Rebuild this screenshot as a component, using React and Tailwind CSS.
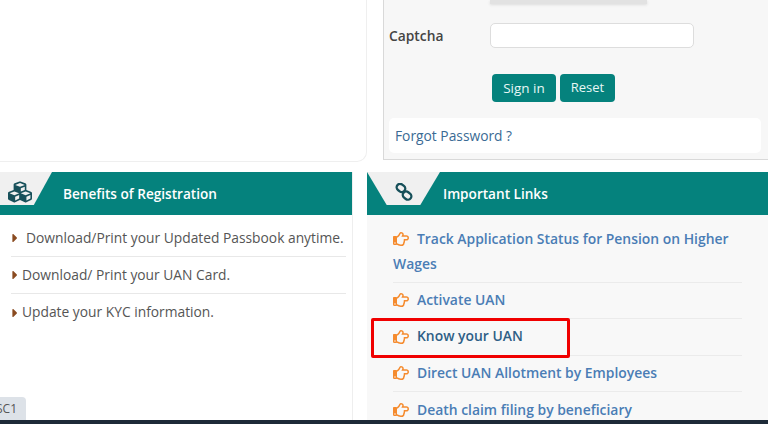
import React from "react";
import { FaCubes, FaRegHandPointRight, FaCaretRight } from "react-icons/fa";

const F = { fontFamily: '"Open Sans", sans-serif' };

function ChainIcon() {
  return (
    <svg width="18" height="18" viewBox="0 0 20 20" fill="none" className="block">
      <g stroke="#17505a" strokeWidth="2.6">
        <rect x="1.6" y="1.7" width="10" height="7.6" rx="3.8" transform="rotate(38 6.6 5.5)" />
        <rect x="8.4" y="10.2" width="10" height="7.6" rx="3.8" transform="rotate(38 13.4 14)" />
      </g>
    </svg>
  );
}

function Benefit({ children, gap, last }) {
  return (
    <li className={`flex items-center h-[37px] ml-[11px] mr-[6px] ${last ? "" : "border-b border-[#e8e8e8]"}`}>
      <FaCaretRight className={`text-[#8a4b20] text-[14px] shrink-0 ml-[-3px] ${gap}`} />
      <span className="text-[13.8px] text-[#555] whitespace-nowrap">{children}</span>
    </li>
  );
}

function LinkRow({ children, active, wrap, last }) {
  return (
    <li className={`ml-[26px] mr-[26px] ${last ? "" : "border-b border-[#ebebeb]"} ${wrap ? "pt-[11px] h-[67.6px]" : "h-[36.5px] flex items-center"}`}>
      <div className={`${wrap ? "leading-[25px]" : "flex items-center"} text-[13.9px] font-semibold ${active ? "text-[#2f5f86]" : "text-[#4a7db5]"}`}>
        <FaRegHandPointRight className={`text-[#f58b2e] text-[16px] mr-[8px] ${wrap ? "inline align-[-3px]" : ""}`} />
        {children}
      </div>
    </li>
  );
}

export default function App() {
  return (
    <div style={F} className="relative w-[768px] h-[424px] overflow-hidden bg-white flex flex-col">
      <div className="flex h-[172px] shrink-0">
        <div className="w-[377px] h-[162px] ml-[-10px] shrink-0 bg-white rounded-br-[10px] border-r border-b border-[#efefef]" />
        <div className="ml-[16px] w-[385px] h-[160px] bg-[#f7f7f7] border border-t-0 border-r-0 border-[#d9d9d9] pl-[5px]">
          <div className="ml-[101px] w-[157px] h-[4px] bg-[#e2e2e2] shadow-[0_1px_3px_#ddd]" />
          <div className="flex items-center mt-[19px] h-[25px]">
            <label className="w-[101px] pt-[2px] text-[13.8px] font-semibold text-[#444]">Captcha</label>
            <input className="w-[204px] h-[25px] bg-white border-[1.5px] border-[#ddd] rounded-[5px]" />
          </div>
          <div className="flex gap-[4px] ml-[103px] mt-[26px]">
            <button className="h-[28px] w-[64px] rounded-[4px] bg-[#05827d] text-[#e8f7f5] text-[13.5px]">Sign in</button>
            <button className="h-[28px] w-[55px] rounded-[4px] bg-[#05827d] text-[#e8f7f5] text-[13px]">Reset</button>
          </div>
          <div className="mt-[16px] mr-[7px] h-[35px] bg-white rounded-[5px] flex items-center pl-[6px] pt-[2px] text-[13.8px] text-[#3a6a94]">
            Forgot Password ?
          </div>
        </div>
      </div>

      <div className="flex flex-1 min-h-0 items-stretch">
        <section className="w-[353px] shrink-0 border-r border-[#eee] bg-white">
          <header className="relative h-[43px] bg-[#05827d] flex items-center pl-[63px] text-white font-semibold text-[13.6px] pt-[1px]">
            <div className="absolute left-0 top-0 w-[52px] h-[33px] bg-[#f0f0f0] [clip-path:polygon(0_0,100%_0,65%_100%,0_100%)] flex items-center pl-[8px] pt-[6px] text-[#17505a] text-[24px]">
              <FaCubes />
            </div>
            Benefits of Registration
          </header>
          <ul className="pt-[5px]">
            <Benefit gap="mr-[4px]">Download/Print your Updated Passbook anytime.</Benefit>
            <Benefit gap="mr-0">Download/ Print your UAN Card.</Benefit>
            <Benefit gap="mr-0" last>Update your KYC information.</Benefit>
          </ul>
        </section>
        <section className="ml-[14px] flex-1 bg-[#f8f8f8]">
          <header className="relative h-[43px] bg-[#05827d] flex items-center pl-[76px] text-white font-semibold text-[13.6px] pt-[1px]">
            <div className="absolute left-0 top-0 w-[73px] h-[33px] bg-[#f0f0f0] [clip-path:polygon(0_0,100%_0,73%_100%,27%_100%)] flex items-center justify-center pt-[7px]">
              <ChainIcon />
            </div>
            Important Links
          </header>
          <ul>
            <LinkRow wrap>Track Application Status for Pension on Higher Wages</LinkRow>
            <LinkRow>Activate UAN</LinkRow>
            <LinkRow active>Know your UAN</LinkRow>
            <LinkRow>Direct UAN Allotment by Employees</LinkRow>
            <LinkRow last>Death claim filing by beneficiary</LinkRow>
          </ul>
        </section>
      </div>

      <div className="absolute left-0 top-[397px] w-[26px] h-[23px] bg-[#dde2e8] rounded-tr-[4px] text-[12px] text-[#555] flex items-center justify-end pr-[9px] overflow-hidden">
        SC1
      </div>
      <div className="absolute left-[371px] top-[318px] w-[199px] h-[40px] border-[3px] border-[#f00000] rounded-[2px] pointer-events-none" />
      <div className="absolute left-0 right-0 bottom-0 h-[4px] bg-[#1d2a38]" />
    </div>
  );
}
